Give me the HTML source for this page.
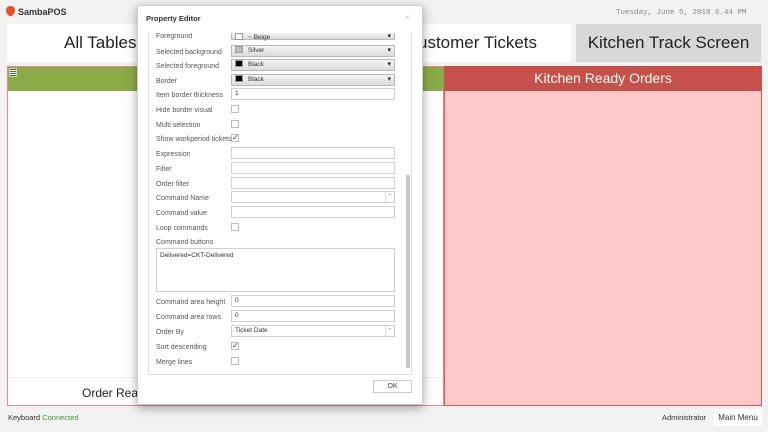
<!DOCTYPE html>
<html><head><meta charset="utf-8"><style>
*{box-sizing:border-box;margin:0;padding:0}
body{width:768px;height:432px;background:#f2f2f2;font-family:"Liberation Sans",sans-serif;position:relative;overflow:hidden}
.a{position:absolute}
.lbl{position:absolute;left:156px;font-size:7px;color:#555;line-height:10px;margin-top:2px}
.inp{position:absolute;left:231px;width:164px;height:12px;border:1px solid #d0d0d0;background:#fff;font-size:6.5px;color:#333;padding-left:3px;line-height:10px}
.cmb{background:linear-gradient(#f4f4f4,#dcdcdc);border-color:#b8b8b8}
.cmb:after{content:"▾";position:absolute;right:3px;top:0;font-size:7px;color:#222}
.sw{display:inline-block;width:8px;height:7px;vertical-align:-1px;margin-right:5px;border:1px solid #999}
.dd:after{content:"";position:absolute;right:8px;top:0;height:10px;border-left:1px solid #ddd}
.dd:before{content:"-";position:absolute;right:3px;top:-1px;font-size:7px;color:#555}
.cb{position:absolute;left:231px;width:8px;height:8px;border:1px solid #bbb;background:#fff;font-size:8px;line-height:6px;color:#333}
</style></head><body>
<div class="a" style="left:6px;top:6px;width:9px;height:10px;background:#e8531e;border-radius:50% 50% 50% 50%/40% 40% 60% 60%"></div>
<div class="a" style="left:18px;top:7px;font-size:9px;font-weight:bold;color:#333">SambaPOS</div>
<div class="a" style="left:616px;top:9px;font-family:'Liberation Mono',monospace;font-size:7.5px;color:#888">Tuesday, June 5, 2018 6.44 PM</div>
<div class="a" style="left:7px;top:24px;width:564px;height:38px;background:#fff"></div>
<div class="a" style="left:64px;top:33px;font-size:17px;color:#222">All Tables</div>
<div class="a" style="left:418px;top:33px;font-size:17px;color:#222">ustomer Tickets</div>
<div class="a" style="left:576px;top:24px;width:185px;height:38px;background:#d8d8d8;font-size:17px;color:#222;text-align:center;line-height:38px">Kitchen Track Screen</div>
<div class="a" style="left:7px;top:66px;width:437px;height:340px;background:#fff;border:1px solid #e88"></div>
<div class="a" style="left:8px;top:67px;width:436px;height:24px;background:#8aab47"></div>
<div class="a" style="left:9px;top:68px;width:8px;height:9px;background:#55703a;border:1px solid #ccc;background-image:repeating-linear-gradient(#55703a 0 1px,#eee 1px 2px)"></div>
<div class="a" style="left:8px;top:377px;width:435px;height:1px;background:#eee"></div>
<div class="a" style="left:82px;top:386px;font-size:12px;color:#222">Order Rea</div>
<div class="a" style="left:444px;top:66px;width:318px;height:340px;background:#ffc9c9;border:1px solid #d55"></div>
<div class="a" style="left:444px;top:66px;width:318px;height:25px;background:#c8504b;color:#ffe;font-size:14px;text-align:center;line-height:25px">Kitchen Ready Orders</div>
<div class="a" style="left:8px;top:413px;font-size:7.5px;color:#333">Keyboard <span style="color:#3a9a3a">Connected</span></div>
<div class="a" style="left:662px;top:413px;font-size:7.5px;color:#333">Administrator</div>
<div class="a" style="left:714px;top:409px;width:48px;height:17px;background:#fff;font-size:8px;color:#333;text-align:center;line-height:17px">Main Menu</div>

<div class="a" style="left:137px;top:5px;width:286px;height:400px;background:#fff;border:1px solid #ccc;box-shadow:0 3px 10px rgba(0,0,0,.35)"></div>
<div class="a" style="left:146px;top:14px;font-size:7.5px;color:#333;font-weight:bold">Property Editor</div>
<div class="a" style="left:405px;top:13px;font-size:8px;color:#ccc">×</div>
<div class="a" style="left:148px;top:33px;width:264px;height:342px;border:1px solid #ddd;border-top:none"></div>
<div class="a" style="left:406px;top:175px;width:4px;height:193px;background:#c8c8c8"></div>

<div class="lbl" style="top:30px">Foreground</div><div class="inp cmb" style="top:32px;height:8px;line-height:8px"><span class="sw" style="background:#fff"></span>~ Beige</div>
<div class="a" style="left:148px;top:27px;width:264px;height:6px;background:#fff"></div>
<div class="lbl" style="top:46px">Selected background</div><div class="inp cmb" style="top:45px"><span class="sw" style="background:#c0c0c0"></span>Silver</div>
<div class="lbl" style="top:60px">Selected foreground</div><div class="inp cmb" style="top:59px"><span class="sw" style="background:#000"></span>Black</div>
<div class="lbl" style="top:75px">Border</div><div class="inp cmb" style="top:74px"><span class="sw" style="background:#000"></span>Black</div>
<div class="lbl" style="top:89px">Item border thickness</div><div class="inp" style="top:88px">1</div>
<div class="lbl" style="top:104px">Hide border visual</div><div class="cb" style="top:105px"></div>
<div class="lbl" style="top:119px">Multi selection</div><div class="cb" style="top:120px"></div>
<div class="lbl" style="top:133px">Show workperiod tickets</div><div class="cb" style="top:134px">✓</div>
<div class="lbl" style="top:148px">Expression</div><div class="inp" style="top:147px"></div>
<div class="lbl" style="top:163px">Filter</div><div class="inp" style="top:162px"></div>
<div class="lbl" style="top:178px">Order filter</div><div class="inp" style="top:177px"></div>
<div class="lbl" style="top:192px">Command Name</div><div class="inp dd" style="top:191px"></div>
<div class="lbl" style="top:207px">Command value</div><div class="inp" style="top:206px"></div>
<div class="lbl" style="top:222px">Loop commands</div><div class="cb" style="top:223px"></div>
<div class="lbl" style="top:236px">Command buttons</div>
<div class="inp" style="left:156px;width:239px;top:248px;height:44px;line-height:14px">Delivered=CKT-Delivered</div>
<div class="lbl" style="top:296px">Command area height</div><div class="inp" style="top:295px">0</div>
<div class="lbl" style="top:311px">Command area rows</div><div class="inp" style="top:310px">0</div>
<div class="lbl" style="top:326px">Order By</div><div class="inp dd" style="top:325px">Ticket Date</div>
<div class="lbl" style="top:341px">Sort descending</div><div class="cb" style="top:342px">✓</div>
<div class="lbl" style="top:356px">Merge lines</div><div class="cb" style="top:357px"></div>
<div class="a" style="left:373px;top:380px;width:39px;height:13px;border:1px solid #ccc;font-size:7px;color:#444;text-align:center;line-height:11px">OK</div>
</body></html>
